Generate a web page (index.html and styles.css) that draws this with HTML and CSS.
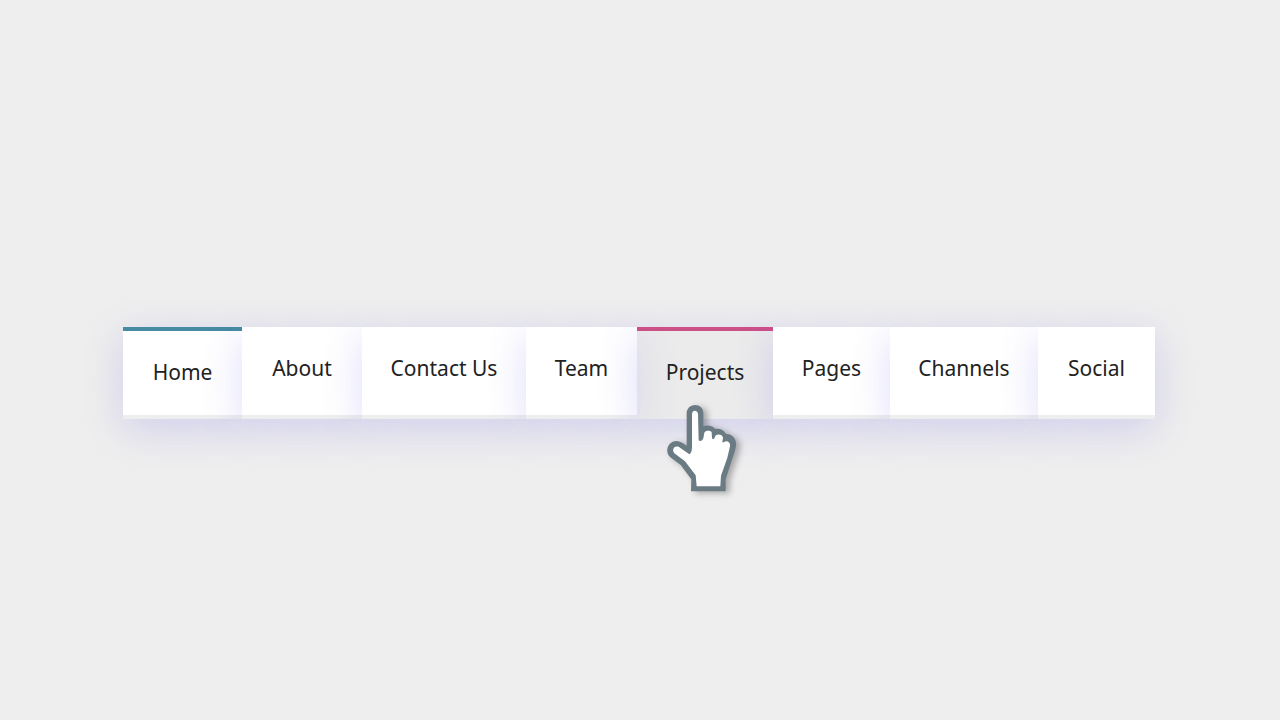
FILE: index.html
```
<!DOCTYPE html>
<html lang="en">
<head>
  <meta charset="UTF-8">
  <meta name="viewport" content="width=device-width, initial-scale=1.0">
  <title>Navigation Menu</title>
  <link rel="stylesheet" href="styles.css">
</head>
<body>

<nav>
  <ul class="menu">
    <li><a href="#" class="active">Home</a></li>
    <li><a href="#">About</a></li>
    <li><a href="#">Contact Us</a></li>
    <li><a href="#">Team</a></li>
    <li>
      <a href="#" class="hover">Projects</a>
      <svg class="pointer" viewBox="75 36 225 285" aria-hidden="true">
        <path d="M153 304 L154 268 L122 225 L90 201 C72 182 86 153 109 153 C120 153 130 160 140 167 L140 70 C141 37 190 37 190 70 L190 109 C203 103 218 107 226 117 C240 115 252 121 258 132 C277 131 291 148 288 168 C285 187 279 199 275 212 L257 268 L257 304 Z" fill="#6b7b83"/>
        <path d="M170 289 L167 256 L135 214 L103 190 C94 178 104 165 117 171 L148 193 C155 189 156 180 156 166 L156 72 C157 59 172 59 174 72 L176 151 C180 156 188 152 190 145 L193 128 C197 121 211 121 215 127 L216 145 C219 151 224 145 226 137 C235 130 247 134 249 143 L247 155 C249 160 254 155 258 154 C265 153 272 160 270 169 L262 203 L243 257 L241 289 Z" fill="#fff"/>
      </svg>
    </li>
    <li><a href="#">Pages</a></li>
    <li><a href="#">Channels</a></li>
    <li><a href="#">Social</a></li>
  </ul>
</nav>

</body>
</html>
```
FILE: styles.css
```
* { box-sizing: border-box; margin: 0; padding: 0; }
body { min-height: 100vh; background: #eee; font-family: "Noto Sans", sans-serif; }
nav { padding: 327px 125px 80px 123px; }

.menu {
  display: grid;
  grid-template-columns: 119fr 120fr 164fr 111fr 136fr 117fr 148fr 117fr;
  list-style: none;
}
.menu li { position: relative; }
.menu a {
  display: block;
  height: 92px;
  padding-top: 26px;
  background: #fff;
  border-bottom: 4px solid #eee;
  box-shadow: 0 10px 40px rgba(90, 80, 230, 0.2);
  color: #222;
  font-size: 21px;
  line-height: 30px;
  text-align: center;
  text-decoration: none;
  white-space: nowrap;
}
.menu .active { border-top: 4px solid #458ba2; }
.menu .hover {
  background: rgba(230, 230, 230, 0.4);
  border-top: 4px solid #cd4f88;
  border-bottom: 0;
}

.pointer {
  position: absolute;
  z-index: 1;
  top: 75px;
  left: 28px;
  width: 75px;
  height: 95px;
  filter: drop-shadow(4px 2px 3px rgba(0, 0, 0, 0.3));
  pointer-events: none;
}
```
